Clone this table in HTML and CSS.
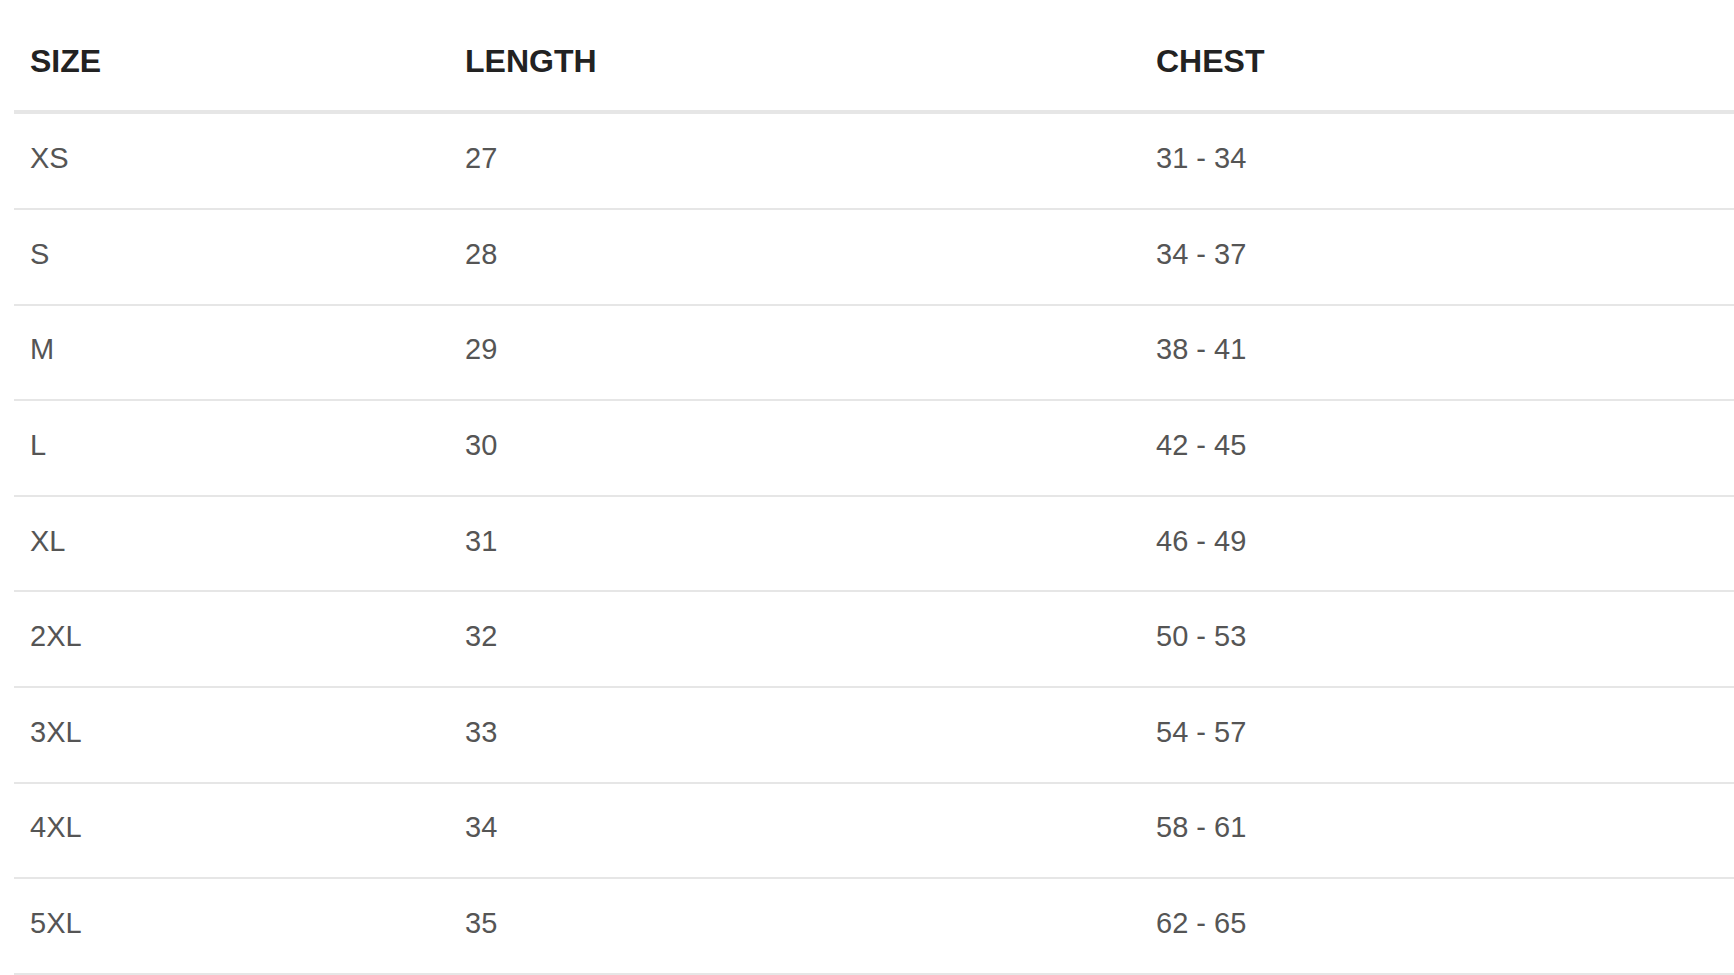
FILE: index.html
```html
<!DOCTYPE html>
<html lang="en">
<head>
<meta charset="utf-8">
<title>Size chart</title>
<link rel="stylesheet" href="styles.css">
</head>
<body>
<div class="size-table">
  <div class="row head">
    <div class="cell">SIZE</div>
    <div class="cell">LENGTH</div>
    <div class="cell">CHEST</div>
  </div>
  <div class="row"><div class="cell">XS</div><div class="cell">27</div><div class="cell">31 - 34</div></div>
  <div class="row"><div class="cell">S</div><div class="cell">28</div><div class="cell">34 - 37</div></div>
  <div class="row"><div class="cell">M</div><div class="cell">29</div><div class="cell">38 - 41</div></div>
  <div class="row"><div class="cell">L</div><div class="cell">30</div><div class="cell">42 - 45</div></div>
  <div class="row"><div class="cell">XL</div><div class="cell">31</div><div class="cell">46 - 49</div></div>
  <div class="row"><div class="cell">2XL</div><div class="cell">32</div><div class="cell">50 - 53</div></div>
  <div class="row"><div class="cell">3XL</div><div class="cell">33</div><div class="cell">54 - 57</div></div>
  <div class="row"><div class="cell">4XL</div><div class="cell">34</div><div class="cell">58 - 61</div></div>
  <div class="row"><div class="cell">5XL</div><div class="cell">35</div><div class="cell">62 - 65</div></div>
</div>
</body>
</html>
```
FILE: styles.css
```css
html, body {
  margin: 0;
  padding: 0;
  background: #ffffff;
}
body {
  font-family: "Liberation Sans", Arial, sans-serif;
  overflow: hidden;
}
.size-table {
  margin-left: 14px;
}
.row {
  display: grid;
  grid-template-columns: 435px 691px 1fr;
  height: 93.6px;
  box-sizing: content-box;
  border-bottom: 2px solid #e6e6e6;
}
.cell {
  padding-left: 16px;
  padding-top: 27.8px;
  font-size: 29px;
  line-height: 33px;
  color: #555555;
}
.row.head {
  height: 110.4px;
  border-bottom: 4px solid #e6e6e6;
}
.row.head .cell {
  padding-top: 43.4px;
  font-size: 32px;
  line-height: 37px;
  font-weight: bold;
  color: #222222;
}
```
